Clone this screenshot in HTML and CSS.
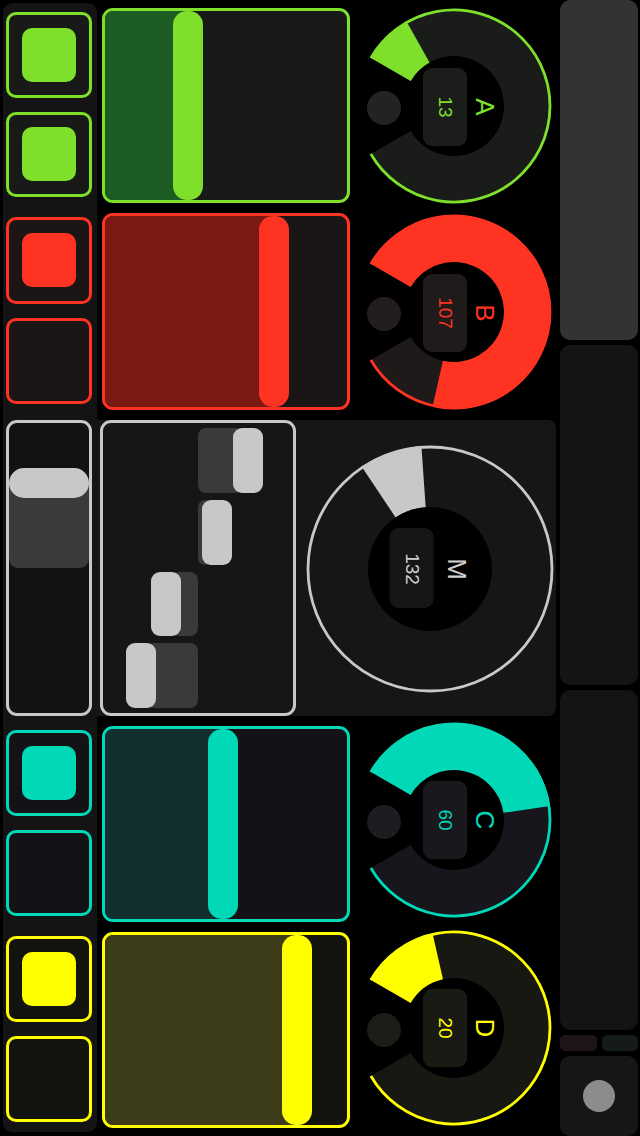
FILE: index.html
```html
<!DOCTYPE html>
<html>
<head>
<meta charset="utf-8">
<link rel="stylesheet" href="styles.css">
</head>
<body>
<div class="app">
  <div class="main">
    <div class="strip-bg"></div>

    <!-- Row A -->
    <div class="btns c1 r1 t-a">
      <div class="btn"><span class="lamp"></span></div>
      <div class="btn"><span class="lamp"></span></div>
    </div>
    <div class="row c2 r1 t-a">
      <div class="fader"><div class="fill" style="width:78px"></div><div class="handle"></div></div>
      <svg class="knob" width="200" height="200" viewBox="0 0 200 200">
        <path class="ring" d="M16,51.5 A97,97 0 1 1 16,148.5 L56.7,125 A50,50 0 1 0 56.7,75 Z"/>
        <path class="edge" d="M16.86,52 A96,96 0 1 1 16.86,148"/>
        <path class="val" d="M16,51.5 A97,97 0 0 1 52.55,15.4 L75.54,56.39 A50,50 0 0 0 56.7,75 Z"/>
        <circle class="dot" cx="30" cy="102" r="17"/>
        <rect class="vbox" x="69" y="62" width="44" height="78" rx="9"/>
        <text class="vtxt" transform="translate(91 101) rotate(90)">13</text>
        <text class="ltxt" transform="translate(131 101) rotate(90)">A</text>
      </svg>
    </div>

    <!-- Row B -->
    <div class="btns c1 r2 t-b">
      <div class="btn"><span class="lamp"></span></div>
      <div class="btn"></div>
    </div>
    <div class="row c2 r2 t-b">
      <div class="fader"><div class="fill" style="width:164px"></div><div class="handle"></div></div>
      <svg class="knob" width="200" height="200" viewBox="0 0 200 200">
        <path class="ring" d="M16,51.5 A97,97 0 1 1 16,148.5 L56.7,125 A50,50 0 1 0 56.7,75 Z"/>
        <path class="edge" d="M16.86,52 A96,96 0 1 1 16.86,148"/>
        <path class="val" d="M16,51.5 A97,97 0 1 1 78.57,194.6 L88.96,148.77 A50,50 0 1 0 56.7,75 Z"/>
        <circle class="dot" cx="30" cy="102" r="17"/>
        <rect class="vbox" x="69" y="62" width="44" height="78" rx="9"/>
        <text class="vtxt" transform="translate(91 101) rotate(90)">107</text>
        <text class="ltxt" transform="translate(131 101) rotate(90)">B</text>
      </svg>
    </div>

    <!-- Row M -->
    <div class="vfader c1 r3">
      <div class="vhandle"></div>
      <div class="vfill"></div>
    </div>
    <div class="mpanel c2 r3">
      <div class="pad">
        <div class="bar"><span class="sp" style="width:95px"></span><span class="mfill" style="width:45px"></span><span class="mhandle after"></span></div>
        <div class="bar"><span class="sp" style="width:95px"></span><span class="mfill" style="width:14px"></span><span class="mhandle after"></span></div>
        <div class="bar"><span class="sp" style="width:48px"></span><span class="mhandle"></span><span class="mfill after" style="width:27px"></span></div>
        <div class="bar"><span class="sp" style="width:23px"></span><span class="mhandle"></span><span class="mfill after" style="width:52px"></span></div>
      </div>
      <svg class="mknob" width="250" height="250" viewBox="0 0 250 250">
        <circle class="medge" cx="125" cy="125" r="122"/>
        <path class="mval" d="M56.76,22.66 A123,123 0 0 1 116.42,2.3 L120.67,63.15 A62,62 0 0 0 90.6,73.42 Z"/>
        <circle class="mhole" cx="125" cy="125" r="62"/>
        <rect class="mbox" x="84.5" y="84" width="44" height="80" rx="9"/>
        <text class="vtxt" transform="translate(107 125) rotate(90)">132</text>
        <text class="ltxt" transform="translate(152 125) rotate(90)">M</text>
      </svg>
    </div>

    <!-- Row C -->
    <div class="btns c1 r4 t-c">
      <div class="btn"><span class="lamp"></span></div>
      <div class="btn"></div>
    </div>
    <div class="row c2 r4 t-c">
      <div class="fader"><div class="fill" style="width:113px"></div><div class="handle"></div></div>
      <svg class="knob up-c" width="200" height="200" viewBox="0 0 200 200">
        <path class="ring" d="M16,51.5 A97,97 0 1 1 16,148.5 L56.7,125 A50,50 0 1 0 56.7,75 Z"/>
        <path class="edge" d="M16.86,52 A96,96 0 1 1 16.86,148"/>
        <path class="val" d="M16,51.5 A97,97 0 0 1 195.99,86.05 L149.48,92.81 A50,50 0 0 0 56.7,75 Z"/>
        <circle class="dot" cx="30" cy="102" r="17"/>
        <rect class="vbox" x="69" y="61" width="44" height="78" rx="9"/>
        <text class="vtxt" transform="translate(91 100) rotate(90)">60</text>
        <text class="ltxt" transform="translate(131 100) rotate(90)">C</text>
      </svg>
    </div>

    <!-- Row D -->
    <div class="btns c1 r5 t-d">
      <div class="btn"><span class="lamp"></span></div>
      <div class="btn"></div>
    </div>
    <div class="row c2 r5 t-d">
      <div class="fader"><div class="fill" style="width:187px"></div><div class="handle"></div></div>
      <svg class="knob up-d" width="200" height="200" viewBox="0 0 200 200">
        <path class="ring" d="M16,51.5 A97,97 0 1 1 16,148.5 L56.7,125 A50,50 0 1 0 56.7,75 Z"/>
        <path class="edge" d="M16.86,52 A96,96 0 1 1 16.86,148"/>
        <path class="val" d="M16,51.5 A97,97 0 0 1 78.57,5.4 L88.96,51.23 A50,50 0 0 0 56.7,75 Z"/>
        <circle class="dot" cx="30" cy="102" r="17"/>
        <rect class="vbox" x="69" y="61" width="44" height="78" rx="9"/>
        <text class="vtxt" transform="translate(91 100) rotate(90)">20</text>
        <text class="ltxt" transform="translate(131 100) rotate(90)">D</text>
      </svg>
    </div>
  </div>

  <div class="side">
    <div class="spanel light"></div>
    <div class="spanel"></div>
    <div class="spanel"></div>
    <div class="pills"><span class="pill red"></span><span class="pill green"></span></div>
    <div class="sbottom"><span class="ball"></span></div>
  </div>
</div>
</body>
</html>
```

FILE: styles.css
```css
html, body {
  margin: 0;
  padding: 0;
  background: #000;
  width: 640px;
  height: 1136px;
  overflow: hidden;
  font-family: "Liberation Sans", Arial, sans-serif;
}

.app {
  display: flex;
  align-items: flex-start;
}

.main {
  display: grid;
  grid-template-columns: 94px 459px;
  grid-template-rows: 195px 197px 296px 196px 196px;
  row-gap: 10px;
  padding: 8px 0 0 3px;
}

.c1 { grid-column: 1; }
.c2 { grid-column: 2; }
.r1 { grid-row: 1; }
.r2 { grid-row: 2; }
.r3 { grid-row: 3; }
.r4 { grid-row: 4; }
.r5 { grid-row: 5; }

.strip-bg {
  grid-column: 1;
  grid-row: 1 / 6;
  margin: -5px 0 -4px 0;
  background: #141414;
  border-radius: 9px;
}

/* themes */
.t-a { --c: #7fe02b; --bg: #171a17; --fill: #1d5c22; --ring: #1a1c1a; --dot: #222422; --box: #1b1d1b; }
.t-b { --c: #ff3322; --bg: #1b1515; --fill: #7a1a13; --ring: #1f1a1a; --dot: #231e1e; --box: #201b1b; }
.t-c { --c: #00d8b8; --bg: #121217; --fill: #14302e; --ring: #16161c; --dot: #1c1c21; --box: #18181d; }
.t-d { --c: #ffff00; --bg: #131310; --fill: #3c3c18; --ring: #181813; --dot: #1d1d18; --box: #1a1a15; }

/* buttons */
.btns {
  display: flex;
  flex-direction: column;
  gap: 14px;
  padding: 4px 5px 6px 3px;
}

.btn {
  flex: 1;
  box-sizing: border-box;
  border: 3px solid var(--c);
  border-radius: 10px;
  background: var(--bg);
  display: flex;
  align-items: center;
  justify-content: center;
}

.lamp {
  width: 54px;
  height: 54px;
  border-radius: 10px;
  background: var(--c);
}

/* rows */
.row {
  display: flex;
  align-items: center;
}

.fader {
  align-self: stretch;
  margin-left: 5px;
  width: 248px;
  box-sizing: border-box;
  border: 3px solid var(--c);
  border-radius: 11px;
  background: var(--bg);
  display: flex;
  overflow: hidden;
}

.fill {
  background: var(--fill);
  border-radius: 8px 0 0 8px;
  flex: none;
}

.handle {
  flex: none;
  width: 30px;
  margin-left: -10px;
  background: var(--c);
  border-radius: 14px;
  position: relative;
  z-index: 1;
}

.knob {
  margin-left: 4px;
  flex: none;
  overflow: visible;
}

.knob.up-c { margin-top: -9px; }
.knob.up-d { margin-top: -5px; }

.knob .ring { fill: var(--ring); }
.knob .edge { fill: none; stroke: var(--c); stroke-width: 2.8; }
.knob .val { fill: var(--c); }
.knob .dot { fill: var(--dot); }
.knob .vbox { fill: var(--box); }

.knob text {
  fill: var(--c);
}

.vtxt, .ltxt {
  font-family: "Liberation Sans", Arial, sans-serif;
  text-anchor: middle;
  dominant-baseline: central;
}

.vtxt { font-size: 19px; }
.ltxt { font-size: 26px; }

/* M row */
.vfader {
  margin-left: 3px;
  width: 86px;
  box-sizing: border-box;
  border: 3px solid #c8c8c8;
  border-radius: 11px;
  background: #121212;
  padding-top: 45px;
  display: flex;
  flex-direction: column;
}

.vhandle {
  height: 30px;
  border-radius: 15px;
  background: #c8c8c8;
  position: relative;
  z-index: 1;
}

.vfill {
  height: 85px;
  margin-top: -15px;
  background: #3a3a3a;
  border-radius: 0 0 9px 9px;
}

.mpanel {
  display: flex;
  align-items: center;
  background: #161616;
  border-radius: 0 8px 8px 0;
}

.pad {
  align-self: stretch;
  margin-left: 3px;
  width: 196px;
  box-sizing: border-box;
  border: 3px solid #c8c8c8;
  border-radius: 11px;
  background: #161616;
  padding: 5px 0;
  display: flex;
  flex-direction: column;
  gap: 7px;
}

.bar {
  flex: 1;
  display: flex;
}

.sp { flex: none; }

.mfill {
  flex: none;
  background: #3a3a3a;
  border-radius: 8px;
}

.mfill.after { margin-left: -10px; }

.mhandle {
  flex: none;
  width: 30px;
  background: #c8c8c8;
  border-radius: 9px;
  position: relative;
  z-index: 1;
}

.mhandle.after { margin-left: -10px; }

.mknob {
  flex: none;
  margin-left: 8.5px;
  margin-top: 2px;
  overflow: visible;
}

.medge { fill: #161616; stroke: #c8c8c8; stroke-width: 2.8; }
.mval { fill: #c8c8c8; }
.mhole { fill: #000; }
.mbox { fill: #161616; }
.mknob text { fill: #d0d0d0; }

/* right column */
.side {
  width: 78px;
  margin-left: 4px;
  display: flex;
  flex-direction: column;
  gap: 5px;
}

.spanel {
  height: 340px;
  border-radius: 10px;
  background: #141414;
}

.spanel.light { background: #333333; }

.pills {
  height: 16px;
  display: flex;
  gap: 5px;
}

.pill {
  flex: 1;
  border-radius: 5px;
}

.pill.red { background: #1e1616; }
.pill.green { background: #151b17; }

.sbottom {
  height: 80px;
  border-radius: 10px;
  background: #161616;
  display: flex;
  align-items: center;
  justify-content: center;
}

.ball {
  width: 32px;
  height: 32px;
  border-radius: 50%;
  background: #8c8c8c;
}
```
